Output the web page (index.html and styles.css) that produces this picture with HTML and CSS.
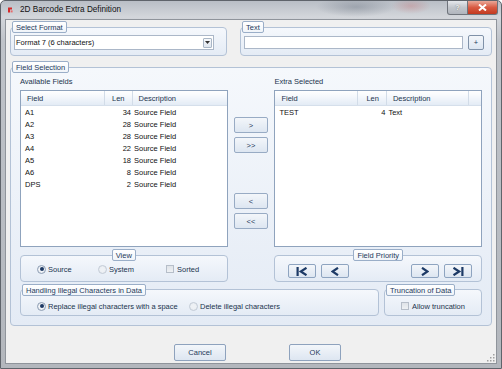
FILE: index.html
```html
<!DOCTYPE html>
<html lang="en">
<head>
    <meta charset="UTF-8">
    <title>2D Barcode Extra Definition</title>
    <link rel="stylesheet" href="styles.css">
</head>
<body>
<div class="window">
    <div class="titlebar">
        <svg class="app-icon" width="6" height="6" viewBox="0 0 6 6">
            <path d="M1 0.5 L5 0.5 L5 2.5 L3 2.5 L3 5.5 L1 5.5 Z" fill="#d42a2a"/>
            <rect x="3.6" y="3.4" width="2" height="2" fill="#e86a6a"/>
        </svg>
        <span class="title">2D Barcode Extra Definition</span>
        <div class="caption">
            <div class="cap-btn cap-help">?</div>
            <div class="cap-btn cap-close">
                <svg width="9" height="7" viewBox="0 0 9 7"><path d="M1 0.5 L8 6.5 M8 0.5 L1 6.5" stroke="#fff" stroke-width="2"/></svg>
            </div>
        </div>
    </div>

    <div class="client">
        <div class="top-row">
            <div class="group format-group">
                <div class="tab">Select Format</div>
                <div class="combo">
                    <span class="combo-text">Format 7 (6 characters)</span>
                    <span class="combo-btn">
                        <svg width="5" height="3" viewBox="0 0 5 3"><path d="M0 0 L5 0 L2.5 3 Z" fill="#333"/></svg>
                    </span>
                </div>
            </div>
            <div class="group text-group">
                <div class="tab">Text</div>
                <div class="text-row">
                    <div class="textbox"></div>
                    <button class="btn plus-btn">+</button>
                </div>
            </div>
        </div>

        <div class="group field-group">
            <div class="tab">Field Selection</div>
            <div class="lists-row">
                <div class="pane">
                    <div class="pane-label">Available Fields</div>
                    <div class="listview">
                        <table class="list-table">
                            <colgroup><col style="width:83px"><col style="width:28px"><col></colgroup>
                            <thead>
                                <tr><th>Field</th><th class="num">Len</th><th>Description</th></tr>
                            </thead>
                            <tbody>
                                <tr><td>A1</td><td class="num">34</td><td class="desc">Source Field</td></tr>
                                <tr><td>A2</td><td class="num">28</td><td class="desc">Source Field</td></tr>
                                <tr><td>A3</td><td class="num">28</td><td class="desc">Source Field</td></tr>
                                <tr><td>A4</td><td class="num">22</td><td class="desc">Source Field</td></tr>
                                <tr><td>A5</td><td class="num">18</td><td class="desc">Source Field</td></tr>
                                <tr><td>A6</td><td class="num">8</td><td class="desc">Source Field</td></tr>
                                <tr><td>DPS</td><td class="num">2</td><td class="desc">Source Field</td></tr>
                            </tbody>
                        </table>
                    </div>
                    <div class="group sub-group">
                        <div class="tab tab-center">View</div>
                        <div class="option-row view-options">
                            <span class="opt"><span class="radio checked"></span>Source</span>
                            <span class="opt"><span class="radio off"></span>System</span>
                            <span class="opt"><span class="check off"></span>Sorted</span>
                        </div>
                    </div>
                </div>

                <div class="mover">
                    <button class="btn move-btn">&gt;</button>
                    <button class="btn move-btn">&gt;&gt;</button>
                    <button class="btn move-btn move-back">&lt;</button>
                    <button class="btn move-btn">&lt;&lt;</button>
                </div>

                <div class="pane">
                    <div class="pane-label">Extra Selected</div>
                    <div class="listview">
                        <table class="list-table">
                            <colgroup><col style="width:82px"><col style="width:29px"><col style="width:82px"><col></colgroup>
                            <thead>
                                <tr><th>Field</th><th class="num">Len</th><th>Description</th><th></th></tr>
                            </thead>
                            <tbody>
                                <tr><td>TEST</td><td class="num">4</td><td class="desc">Text</td><td></td></tr>
                            </tbody>
                        </table>
                    </div>
                    <div class="group sub-group priority-group">
                        <div class="tab tab-center">Field Priority</div>
                        <div class="priority-row">
                            <button class="btn nav-btn">
                                <svg width="12" height="9" viewBox="0 0 12 9"><rect x="0.5" y="0" width="2.2" height="9" fill="#1d3a66"/><path d="M10.5 0.8 L4.8 4.5 L10.5 8.2" fill="none" stroke="#1d3a66" stroke-width="2.2"/></svg>
                            </button>
                            <button class="btn nav-btn">
                                <svg width="8" height="9" viewBox="0 0 8 9"><path d="M7 0.8 L1.5 4.5 L7 8.2" fill="none" stroke="#1d3a66" stroke-width="2.2"/></svg>
                            </button>
                            <button class="btn nav-btn nav-right">
                                <svg width="8" height="9" viewBox="0 0 8 9"><path d="M1 0.8 L6.5 4.5 L1 8.2" fill="none" stroke="#1d3a66" stroke-width="2.2"/></svg>
                            </button>
                            <button class="btn nav-btn">
                                <svg width="12" height="9" viewBox="0 0 12 9"><path d="M1.5 0.8 L7.2 4.5 L1.5 8.2" fill="none" stroke="#1d3a66" stroke-width="2.2"/><rect x="9.3" y="0" width="2.2" height="9" fill="#1d3a66"/></svg>
                            </button>
                        </div>
                    </div>
                </div>
            </div>

            <div class="options-row">
                <div class="group sub-group handling-group">
                    <div class="tab tab-low">Handling Illegal Characters in Data</div>
                    <div class="option-row handling-options">
                        <span class="opt"><span class="radio checked"></span>Replace illegal characters with a space</span>
                        <span class="opt"><span class="radio off"></span>Delete illegal characters</span>
                    </div>
                </div>
                <div class="group sub-group trunc-group">
                    <div class="tab tab-low">Truncation of Data</div>
                    <div class="option-row trunc-options">
                        <span class="opt"><span class="check off"></span>Allow truncation</span>
                    </div>
                </div>
            </div>
        </div>

        <div class="dialog-buttons">
            <button class="btn dialog-btn">Cancel</button>
            <button class="btn dialog-btn">OK</button>
        </div>

        <svg class="grip" width="8" height="8" viewBox="0 0 8 8">
            <rect x="6" y="0" width="1.5" height="1.5" fill="#a0a0a0"/>
            <rect x="3" y="3" width="1.5" height="1.5" fill="#a0a0a0"/>
            <rect x="6" y="3" width="1.5" height="1.5" fill="#a0a0a0"/>
            <rect x="0" y="6" width="1.5" height="1.5" fill="#a0a0a0"/>
            <rect x="3" y="6" width="1.5" height="1.5" fill="#a0a0a0"/>
            <rect x="6" y="6" width="1.5" height="1.5" fill="#a0a0a0"/>
        </svg>
    </div>
</div>
</body>
</html>
```

FILE: styles.css
```css
body {
    margin: 0;
    font-family: "Liberation Sans", Arial, sans-serif;
    font-size: 7.5px;
    color: #1e395b;
    background: #fff;
}
.window {
    width: 502px;
    height: 369px;
    box-sizing: border-box;
    display: flex;
    flex-direction: column;
    border: 1px solid #5f646b;
    border-radius: 5px 5px 0 0;
    background:
        radial-gradient(ellipse 40px 10px at 355px 6px, rgba(90, 100, 115, 0.35), transparent),
        radial-gradient(ellipse 20px 8px at 410px 5px, rgba(200, 80, 80, 0.25), transparent),
        linear-gradient(#b9bec6, #d3d6db 16px, #bfc3c9 40px, #b3b7bd);
}
.titlebar {
    height: 18px;
    display: flex;
    align-items: flex-start;
}
.app-icon {
    margin: 6px 0 0 6px;
}
.title {
    margin: 4px 0 0 7px;
    font-size: 8.2px;
    color: #111;
}
.caption {
    margin-left: auto;
    margin-right: 3px;
    display: flex;
}
.cap-btn {
    height: 14px;
    box-sizing: border-box;
    border: 1px solid #6f747c;
    border-top: none;
    display: flex;
    align-items: center;
    justify-content: center;
    font-weight: bold;
    font-size: 8px;
    color: #f4f4f4;
}
.cap-help {
    width: 21px;
    border-radius: 0 0 0 3px;
    background: linear-gradient(#e6e8ec, #c2c6cc 50%, #b0b5bd);
    text-shadow: 0 0 1px #555;
}
.cap-close {
    width: 30px;
    border-left: none;
    border-radius: 0 0 3px 0;
    background: linear-gradient(#eaa898, #d85a42 50%, #c23a20);
}

.client {
    flex: 1;
    margin: 0 4px 4px 4px;
    padding: 0 4px;
    background: #f0f0f0;
    border: 1px solid #8f949b;
    display: flex;
    flex-direction: column;
    position: relative;
}

/* group boxes */
.group {
    box-sizing: border-box;
    display: flex;
    flex-direction: column;
    border: 1px solid #b3c2d6;
    border-radius: 4px;
    background: linear-gradient(#f5f8fc, #e4ebf5);
}
.tab {
    align-self: flex-start;
    margin: -7px 0 0 1px;
    padding: 0 3px;
    height: 12px;
    line-height: 11px;
    box-sizing: border-box;
    border: 1px solid #9aaec8;
    border-radius: 2px;
    background: linear-gradient(#ffffff, #f0f4f9);
    color: #1e395b;
    white-space: nowrap;
}
.tab-center {
    align-self: center;
    margin-left: 0;
}
.tab-low {
    margin-top: -6px;
}

.top-row {
    display: flex;
    margin-top: 7px;
}
.format-group {
    width: 217px;
    height: 29px;
}
.text-group {
    flex: 1;
    height: 29px;
    margin-left: 13px;
}
.combo {
    margin: 2px 0 0 3px;
    width: 200px;
    height: 15px;
    box-sizing: border-box;
    background: #fff;
    border: 1px solid #abb7c8;
    display: flex;
    align-items: center;
}
.combo-text {
    flex: 1;
    padding-left: 1px;
    color: #111;
}
.combo-btn {
    width: 9px;
    height: 10px;
    margin-right: 1px;
    box-sizing: border-box;
    border: 1px solid #a9b6c6;
    border-radius: 1px;
    background: linear-gradient(#f7f9fc, #dfe6ef);
    display: flex;
    align-items: center;
    justify-content: center;
}
.text-row {
    display: flex;
    align-items: center;
    margin: 2px 0 0 3px;
}
.textbox {
    width: 219px;
    height: 13px;
    box-sizing: border-box;
    background: #fff;
    border: 1px solid #abb7c8;
}

/* buttons */
.btn {
    font-family: inherit;
    font-size: 7.5px;
    color: #1e395b;
    padding: 0;
    margin: 0;
    box-sizing: border-box;
    border: 1px solid #98abc4;
    border-radius: 2px;
    background: linear-gradient(#f3f6fa, #dde6f1);
    display: flex;
    align-items: center;
    justify-content: center;
}
.plus-btn {
    width: 16px;
    height: 15px;
    margin-left: 5px;
    border-color: #7f91a8;
}

.field-group {
    margin-top: 11px;
    height: 259px;
}
.lists-row {
    display: flex;
    margin-top: 4px;
    padding: 0 9px;
}
.pane {
    width: 208px;
    display: flex;
    flex-direction: column;
}
.pane-label {
    height: 10px;
    line-height: 10px;
    color: #22344e;
}
.listview {
    margin-top: 3px;
    height: 157px;
    box-sizing: border-box;
    border: 1px solid #8fa3bd;
    background: #fff;
    overflow: hidden;
}
.list-table {
    width: 100%;
    table-layout: fixed;
    border-collapse: collapse;
}
.list-table th {
    height: 14px;
    padding: 0 0 0 6px;
    font-weight: normal;
    text-align: left;
    color: #22344e;
    border-right: 1px solid #d2dce8;
    border-bottom: 1px solid #d5dfeb;
    background: linear-gradient(#ffffff, #f2f6fb 50%, #e3ebf5);
    white-space: nowrap;
}
.list-table th.num {
    text-align: right;
    padding: 0 7px 0 0;
}
.list-table th:last-child {
    border-right: none;
}
.list-table td {
    height: 12px;
    padding: 0 0 0 4px;
    color: #111;
    white-space: nowrap;
}
.list-table td.num {
    text-align: right;
    padding: 0 1px 0 0;
}
.list-table td.desc {
    padding-left: 2px;
}

.mover {
    width: 35px;
    margin: 0 6px 0 6px;
    display: flex;
    flex-direction: column;
}
.move-btn {
    height: 16px;
    margin-top: 4px;
}
.move-btn:first-child {
    margin-top: 40px;
}
.move-btn.move-back {
    margin-top: 40px;
}

.sub-group {
    height: 27px;
    margin-top: 8px;
}
.option-row {
    display: grid;
    align-items: center;
    height: 10px;
    margin-top: 3px;
    color: #22344e;
}
.view-options {
    grid-template-columns: 61px 68px auto;
    padding-left: 16px;
}
.opt {
    display: flex;
    align-items: center;
    white-space: nowrap;
}
.radio {
    width: 9px;
    height: 9px;
    box-sizing: border-box;
    border-radius: 50%;
    border: 1px solid #8e9eb4;
    background: radial-gradient(circle, #f4f6f9 40%, #d9dfe7);
    margin-right: 2px;
    display: flex;
    align-items: center;
    justify-content: center;
}
.radio.checked::after {
    content: "";
    width: 4px;
    height: 4px;
    border-radius: 50%;
    background: #1c3864;
}
.radio.off {
    border-color: #c3cbd6;
    background: radial-gradient(circle, #eef1f5 40%, #dfe4ea);
}
.check {
    width: 8px;
    height: 8px;
    box-sizing: border-box;
    border: 1px solid #b6bec9;
    background: linear-gradient(#dfe3e8, #eef1f4);
    margin-right: 3px;
}

.priority-row {
    display: flex;
    margin-top: 3px;
    padding: 0 9px 0 13px;
}
.nav-btn {
    width: 28px;
    height: 14px;
    margin-left: 5px;
    border-color: #8ea4c0;
}
.nav-btn:first-child {
    margin-left: 0;
}
.nav-btn.nav-right {
    margin-left: auto;
}

.options-row {
    display: flex;
    padding: 0 9px;
    margin-top: -1px;
}
.handling-group {
    width: 359px;
}
.handling-options {
    grid-template-columns: 152px auto;
    padding-left: 16px;
    margin-top: 5px;
}
.trunc-group {
    flex: 1;
    margin-left: 5px;
}
.trunc-options {
    padding-left: 16px;
    margin-top: 5px;
}

.dialog-buttons {
    display: flex;
    margin-top: 18px;
    padding-left: 164px;
}
.dialog-btn {
    width: 52px;
    height: 17px;
    border-color: #8ea2bd;
}
.dialog-btn + .dialog-btn {
    margin-left: 63px;
}
.grip {
    position: absolute;
    right: 1px;
    bottom: 1px;
}
```
